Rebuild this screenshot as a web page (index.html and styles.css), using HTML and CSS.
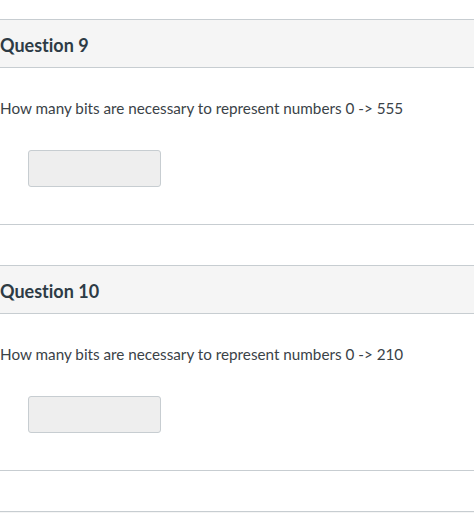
FILE: index.html
```html
<!DOCTYPE html>
<html>
<head>
<meta charset="utf-8">
<link rel="stylesheet" href="styles.css">
</head>
<body>
<div class="quiz">
  <section class="question">
    <div class="question-header">Question 9</div>
    <div class="question-text">How many bits are necessary to represent numbers 0 -&gt; 555</div>
    <div class="answer"><input class="answer-input" type="text"></div>
    <div class="question-footer"></div>
  </section>
  <section class="question">
    <div class="question-header">Question 10</div>
    <div class="question-text">How many bits are necessary to represent numbers 0 -&gt; 210</div>
    <div class="answer"><input class="answer-input" type="text"></div>
    <div class="question-footer"></div>
  </section>
  <div class="question-header empty"></div>
</div>
</body>
</html>
```
FILE: styles.css
```css
html, body {
  margin: 0;
  padding: 0;
  background: #ffffff;
}
body {
  font-family: Lato, "Open Sans", sans-serif;
  color: #2d3b45;
  font-variant-ligatures: none;
  font-feature-settings: "liga" 0, "clig" 0;
}
.quiz {
  padding-top: 19px;
  overflow: hidden;
}
.question {
  display: flex;
  flex-direction: column;
}
.question-header {
  box-sizing: border-box;
  border-top: 1px solid #c7cdd1;
  border-bottom: 1px solid #c7cdd1;
  background: #f5f5f5;
  height: 49px;
  padding-top: 4px;
  line-height: 43px;
  font-size: 18px;
  font-weight: 700;
  color: #2d3b45;
  white-space: nowrap;
}
.question-header.empty {
  height: 40px;
}
.question-text {
  margin-top: 30px;
  font-size: 15.25px;
  line-height: 20px;
  color: #3a4247;
  white-space: nowrap;
}
.answer {
  margin-top: 32px;
  padding-left: 28px;
}
.answer-input {
  display: block;
  box-sizing: border-box;
  width: 133px;
  height: 37px;
  margin: 0;
  background: #eeeeee;
  border: 1px solid #c7cdd1;
  border-radius: 3px;
  padding: 0;
  outline: none;
}
.question-footer {
  margin-top: 37px;
  margin-bottom: 40px;
  border-top: 1px solid #c7cdd1;
}
```
